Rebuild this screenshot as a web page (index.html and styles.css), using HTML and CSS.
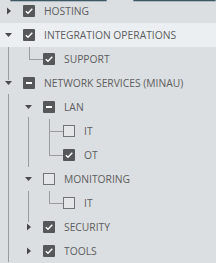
FILE: index.html
```html
<!DOCTYPE html>
<html>
<head>
<meta charset="utf-8">
<link rel="stylesheet" href="styles.css">
</head>
<body>
<div class="topbar"><span class="seg seg1"></span><span class="seg seg2"></span></div>
<ul class="tree">
  <li>
    <div class="row"><span class="toggle"><svg viewBox="0 0 16 24" width="16" height="24"><polygon points="7,8.5 11,12 7,15.5"/></svg></span><span class="cb on"><svg viewBox="0 0 12 12" width="12" height="12"><path d="M2.8 6.2 L5 8.3 L9.3 3.8"/></svg></span><span class="label">HOSTING</span></div>
  </li>
  <li>
    <div class="row hl"><span class="toggle"><svg viewBox="0 0 16 24" width="16" height="24"><polygon points="5,10 12,10 8.5,14"/></svg></span><span class="cb on"><svg viewBox="0 0 12 12" width="12" height="12"><path d="M2.8 6.2 L5 8.3 L9.3 3.8"/></svg></span><span class="label">INTEGRATION OPERATIONS</span></div>
    <ul class="children ext-int">
      <li>
        <div class="row leaf last"><span class="toggle"></span><span class="cb on"><svg viewBox="0 0 12 12" width="12" height="12"><path d="M2.8 6.2 L5 8.3 L9.3 3.8"/></svg></span><span class="label">SUPPORT</span></div>
      </li>
    </ul>
  </li>
  <li>
    <div class="row"><span class="toggle"><svg viewBox="0 0 16 24" width="16" height="24"><polygon points="5,10 12,10 8.5,14"/></svg></span><span class="cb part"><svg viewBox="0 0 12 12" width="12" height="12"><path d="M3 6 H9"/></svg></span><span class="label">NETWORK SERVICES (MINAU)</span></div>
    <ul class="children ext-net">
      <li>
        <div class="row"><span class="toggle"><svg viewBox="0 0 16 24" width="16" height="24"><polygon points="5,10 12,10 8.5,14"/></svg></span><span class="cb part"><svg viewBox="0 0 12 12" width="12" height="12"><path d="M3 6 H9"/></svg></span><span class="label">LAN</span></div>
        <ul class="children">
          <li>
            <div class="row leaf"><span class="toggle"></span><span class="cb off"></span><span class="label">IT</span></div>
          </li>
          <li>
            <div class="row leaf last"><span class="toggle"></span><span class="cb on"><svg viewBox="0 0 12 12" width="12" height="12"><path d="M2.8 6.2 L5 8.3 L9.3 3.8"/></svg></span><span class="label">OT</span></div>
          </li>
        </ul>
      </li>
      <li>
        <div class="row"><span class="toggle"><svg viewBox="0 0 16 24" width="16" height="24"><polygon points="5,10 12,10 8.5,14"/></svg></span><span class="cb off"></span><span class="label">MONITORING</span></div>
        <ul class="children ext-mon">
          <li>
            <div class="row leaf last"><span class="toggle"></span><span class="cb off"></span><span class="label">IT</span></div>
          </li>
        </ul>
      </li>
      <li>
        <div class="row"><span class="toggle"><svg viewBox="0 0 16 24" width="16" height="24"><polygon points="7,8.5 11,12 7,15.5"/></svg></span><span class="cb on"><svg viewBox="0 0 12 12" width="12" height="12"><path d="M2.8 6.2 L5 8.3 L9.3 3.8"/></svg></span><span class="label">SECURITY</span></div>
      </li>
      <li>
        <div class="row last-row"><span class="toggle"><svg viewBox="0 0 16 24" width="16" height="24"><polygon points="7,8.5 11,12 7,15.5"/></svg></span><span class="cb on"><svg viewBox="0 0 12 12" width="12" height="12"><path d="M2.8 6.2 L5 8.3 L9.3 3.8"/></svg></span><span class="label">TOOLS</span></div>
      </li>
    </ul>
  </li>
</ul>
</body>
</html>
```
FILE: styles.css
```css
html, body {
  margin: 0;
  padding: 0;
  background: #dcdfe1;
  overflow: hidden;
}
body {
  width: 216px;
  height: 263px;
  position: relative;
  font-family: "Open Sans", "Noto Sans", sans-serif;
  font-size: 10.3px;
  color: #5c5e60;
}
.topbar {
  position: absolute;
  top: 0;
  left: 0;
  right: 0;
  height: 2px;
  z-index: 2;
}
.seg {
  position: absolute;
  top: 0;
  height: 1px;
  background: #3f5560;
  border-bottom: 1px solid #a9bcc6;
  border-radius: 0 0 2px 2px;
}
.seg1 { left: 10px; width: 97px; }
.seg2 { left: 133px; right: 0; }
.tree {
  list-style: none;
  margin: -1px 0 0 0;
  padding: 0;
}
.tree ul {
  list-style: none;
  margin: 0;
  padding: 0 0 0 20px;
}
.children {
  position: relative;
}
.children::before {
  content: "";
  position: absolute;
  left: 8px;
  top: -2px;
  bottom: 0;
  width: 1px;
  background: #9a9c9e;
}
.ext-int::before { top: 0; bottom: -9px; }
.ext-net::before { top: -1px; bottom: 0; }
.ext-mon::before { top: 0; bottom: -7px; }
.row {
  display: flex;
  align-items: center;
  height: 24px;
  white-space: nowrap;
}
.row.last-row {
  height: 23px;
}
.row.hl {
  background: #eceff1;
  margin-left: -200px;
  padding-left: 200px;
}
.toggle {
  position: relative;
  flex: 0 0 16px;
  width: 16px;
  height: 24px;
  margin-right: 7px;
}
.toggle svg {
  display: block;
  fill: #4a4a4a;
}
.leaf .toggle::before {
  content: "";
  position: absolute;
  left: 9px;
  top: 0;
  height: 24px;
  width: 1px;
  background: #9a9c9e;
}
.leaf.last .toggle::before {
  height: 12px;
}
.leaf .toggle::after {
  content: "";
  position: absolute;
  left: 9px;
  top: 12px;
  width: 14px;
  height: 1px;
  background: #9a9c9e;
}
.cb {
  flex: 0 0 12px;
  width: 12px;
  height: 12px;
  box-sizing: border-box;
  margin-right: 9px;
  position: relative;
  z-index: 1;
}
.cb svg {
  display: block;
  fill: none;
  stroke: #fff;
  stroke-width: 1.4;
}
.cb.on, .cb.part {
  background: #555759;
  border-radius: 1px;
}
.cb.part svg {
  stroke-width: 2;
}
.cb.off {
  border: 1px solid #727476;
  background: #e4e6e8;
}
.label {
  letter-spacing: 0;
}
```
